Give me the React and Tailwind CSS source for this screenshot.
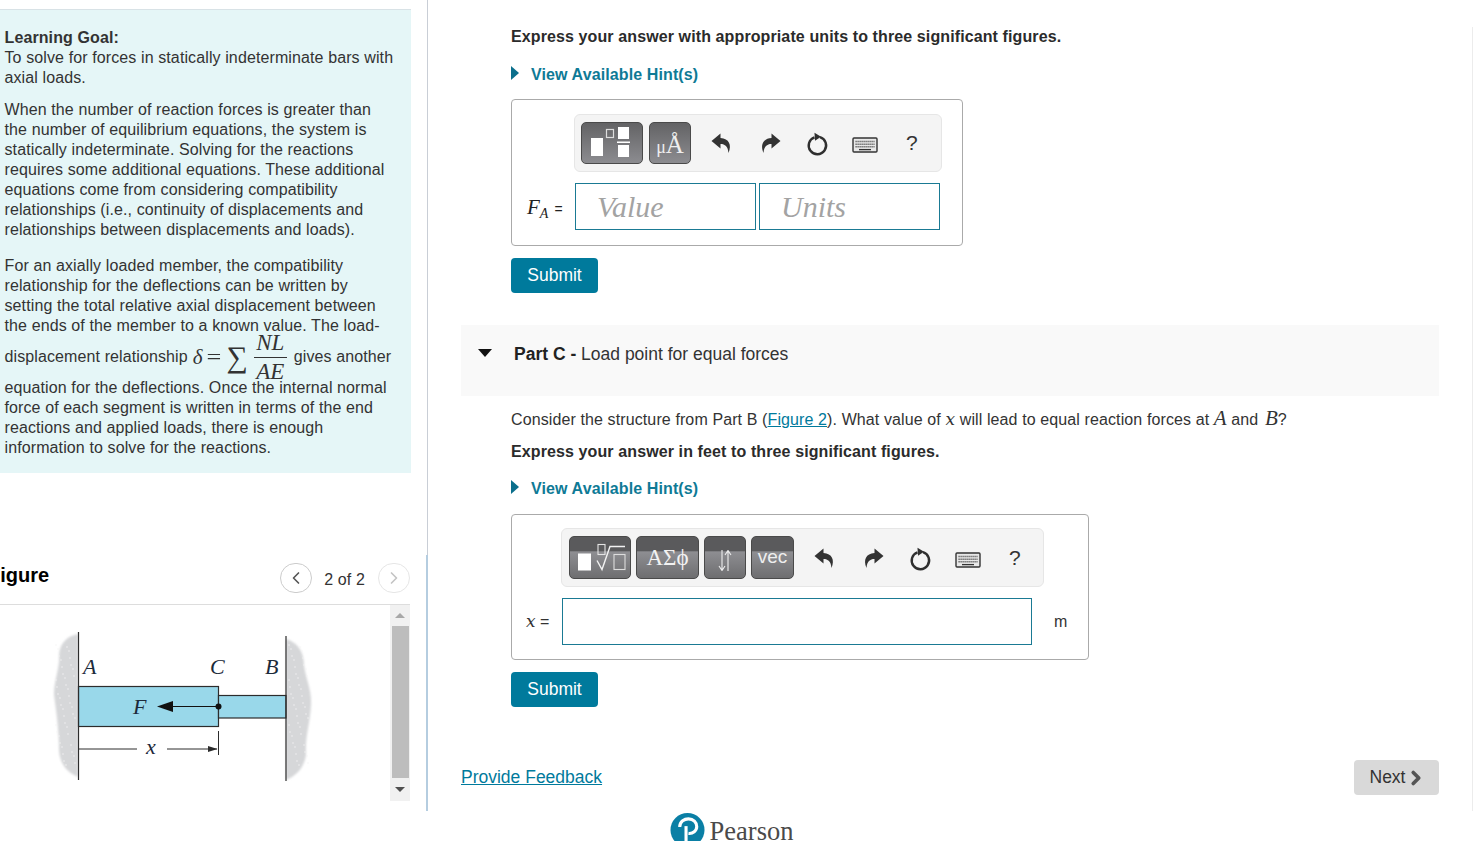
import React from 'react';
import { ChevronLeft, ChevronRight } from 'lucide-react';

const serif = 'font-["Liberation_Serif",serif]';
const mathX = 'font-["DejaVu_Serif",serif]';

const UndoIcon = () => (
    <svg width="24" height="24" viewBox="0 0 24 24" fill="#333">
        <path d="M10.5 2.5 L1.5 10 L10.5 17.5 V13 C15 13 18 15.5 18.5 22 C22 14 19 7.5 10.5 7 Z" />
    </svg>
);

const RedoIcon = () => (
    <svg width="24" height="24" viewBox="0 0 24 24" fill="#333">
        <path d="M13.5 2.5 L22.5 10 L13.5 17.5 V13 C9 13 6 15.5 5.5 22 C2 14 5 7.5 13.5 7 Z" />
    </svg>
);

const ResetIcon = () => (
    <svg width="24" height="24" viewBox="0 0 24 24" fill="none">
        <path d="M9.5 5.3 A8.7 8.7 0 1 0 15 5.2" stroke="#2f2f2f" strokeWidth="2.4" />
        <path d="M9.5 0.8 L16 4.8 L10 8.8 Z" fill="#2f2f2f" />
    </svg>
);

const KeyboardIcon = () => (
    <svg width="26" height="16" viewBox="0 0 26 16" fill="none">
        <rect x="1" y="1" width="24" height="14" rx="1" fill="#e8e8e8" stroke="#333" strokeWidth="1.4" />
        <path d="M3.5 4.5 H22.5 M3.5 7.2 H22.5 M3.5 9.8 H22.5" stroke="#555" strokeWidth="1.4" strokeDasharray="1.2 0.8" />
        <path d="M7 12.6 H19" stroke="#333" strokeWidth="1.3" />
    </svg>
);

const ToolIcons = ({ className }) => (
    <div className={`flex items-center ${className}`}>
        <div className="flex h-[42px] w-[50px] items-center justify-center"><UndoIcon /></div>
        <div className="flex h-[42px] w-[46px] items-center justify-center"><RedoIcon /></div>
        <div className="flex h-[42px] w-12 items-center justify-center pt-0.5"><ResetIcon /></div>
        <div className="flex h-[42px] w-12 items-center justify-center pt-1"><KeyboardIcon /></div>
        <div className="flex h-[42px] w-[46px] items-center justify-center text-[21px] text-[#333]">?</div>
    </div>
);

const HintLink = () => (
    <div className="flex h-5 items-center">
        <span className="mb-1 h-0 w-0 border-y-[7px] border-l-[8px] border-y-transparent border-l-[#0b6f8c]"></span>
        <span className="ml-3 font-bold text-[#0e7a96]">View Available Hint(s)</span>
    </div>
);

const SubmitButton = () => (
    <button className="mt-3 block h-[35px] w-[87px] rounded-sm bg-[#007a9c] text-[17.5px] tracking-normal text-white">Submit</button>
);

const FlatButton = ({ width, children }) => (
    <div className={`flex h-[42px] items-center justify-center rounded-[5px] border border-[#4a4a4a] bg-[linear-gradient(#636365,#8c8c90)] ${width}`}>
        {children}
    </div>
);

const BandButton = ({ width, children }) => (
    <div className={`flex h-[43px] items-center justify-center rounded-[5px] border border-[#4a4a4a] bg-[linear-gradient(#5a5a5c_0,#5a5a5c_34%,#8e8e92_36%,#6e6e70_100%)] ${width}`}>
        {children}
    </div>
);

const WallSpeckles = ({ x0 }) => {
    const dots = [];
    for (let i = 0; i < 42; i++) {
        dots.push(<circle key={i} cx={x0 + ((i * 7) % 20)} cy={645 + ((i * 29) % 125)} r="0.7" fill="#f4f4f4" />);
    }
    return <g>{dots}</g>;
};

const BarFigure = () => (
    <svg width="390" height="196" viewBox="0 605 390 196" className="block">
        <path className="blur-[1px]" d="M78 634 C68 636 60 642 59 655 C60 668 54 680 54 695 C56 710 58 722 59 745 C58 762 66 772 78 777 Z" fill="#d6d7d9" />
        <path className="blur-[1px]" d="M286 639 C296 642 304 650 304 665 C306 680 312 690 311 705 C310 725 305 735 306 755 C304 768 296 776 286 780 Z" fill="#d6d7d9" />
        <WallSpeckles x0={56} />
        <WallSpeckles x0={289} />
        <rect x="78.5" y="686.5" width="140" height="40" fill="#99d8ea" stroke="#2c2c2c" strokeWidth="1.2" />
        <rect x="218.5" y="695.5" width="67.5" height="22.5" fill="#99d8ea" stroke="#2c2c2c" strokeWidth="1.2" />
        <path d="M78.5 632 V780 M286 636 V781" stroke="#2c2c2c" strokeWidth="1.2" />
        <path d="M218 706.5 H170" stroke="#111" strokeWidth="1.2" />
        <path d="M157 706.5 L173 701 V712 Z" fill="#111" />
        <circle cx="218.5" cy="706.5" r="3" fill="#111" />
        <path d="M78.5 749 H137 M167 749 H217 M218.5 731 V755" stroke="#2c2c2c" strokeWidth="1" />
        <path d="M217.5 749 L208 746 V752 Z" fill="#2c2c2c" />
        <g fontFamily="Liberation Serif, serif" fontStyle="italic" fontSize="22" fill="#1c2a3a">
            <text x="83" y="674">A</text>
            <text x="210" y="674">C</text>
            <text x="265" y="674">B</text>
            <text x="133" y="714">F</text>
            <text x="146" y="754">x</text>
        </g>
    </svg>
);

const ScrollRail = () => (
    <div className="flex h-[196px] w-5 flex-col items-center bg-[#f1f1f1]">
        <div className="flex h-[21px] w-full items-center justify-center">
            <span className="h-0 w-0 border-x-[5px] border-b-[5px] border-x-transparent border-b-[#a8a8a8]"></span>
        </div>
        <div className="h-[152px] w-[17px] bg-[#bdbdbd]"></div>
        <div className="flex h-[23px] w-full items-center justify-center">
            <span className="h-0 w-0 border-x-[5px] border-t-[5px] border-x-transparent border-t-[#505050]"></span>
        </div>
    </div>
);

const LeftColumn = () => (
    <div className="w-[427px] overflow-hidden pt-[9px]">
        <div className="w-[411px] border-t border-[#d8e2e6] bg-[#e5f6f7] pb-[15px] pl-[4.5px] pr-4 pt-[18px] leading-5 text-[#333]">
            <p className="font-bold">Learning Goal:</p>
            <p>To solve for forces in statically indeterminate bars with axial loads.</p>
            <p className="mt-3">
                When the number of reaction forces is greater than the number of equilibrium equations, the system is
                statically indeterminate. Solving for the reactions requires some additional equations. These additional
                equations come from considering compatibility relationships (i.e., continuity of displacements and
                relationships between displacements and loads).
            </p>
            <p className="mt-4">
                For an axially loaded member, the compatibility relationship for the deflections can be written by
                setting the total relative axial displacement between the ends of the member to a known value. The load-
            </p>
            <div className="flex h-[42px] items-center whitespace-nowrap">
                <span>displacement relationship</span>
                <span className={`ml-[5px] flex items-center text-[21px] tracking-normal ${serif}`}>
                    <i>δ</i>
                    <span className="ml-[5px] scale-x-125">=</span>
                    <span className="ml-[7px] text-[30px] leading-none">∑</span>
                </span>
                <span className={`ml-[6px] flex w-[33px] flex-col items-center text-[23px] italic leading-[28px] tracking-normal ${serif}`}>
                    <span className="w-full border-b border-[#333] text-center">NL</span>
                    <span>AE</span>
                </span>
                <span className="ml-[7px]">gives another</span>
            </div>
            <p>
                equation for the deflections. Once the internal normal force of each segment is written in terms of the end
                reactions and applied loads, there is enough information to solve for the reactions.
            </p>
        </div>

        <div className="mt-[87px] flex h-[45px] w-[410px] items-start border-b border-[#ddd]">
            <span className="-ml-[12px] mt-[1px] text-xl font-bold tracking-normal text-black">Figure</span>
            <div className="ml-auto mt-[3px] flex items-center">
                <div className="flex h-[30px] w-8 items-center justify-center rounded-full border border-[#ccc]">
                    <ChevronLeft size={20} color="#555" />
                </div>
                <span className="ml-3 mr-[13px] mt-1 text-[#333]">2 of 2</span>
                <div className="flex h-[30px] w-8 items-center justify-center rounded-full border border-[#e6e6e6]">
                    <ChevronRight size={20} color="#c4c4c4" />
                </div>
            </div>
        </div>
        <div className="flex w-[410px]">
            <BarFigure />
            <ScrollRail />
        </div>
    </div>
);

const Divider = () => (
    <div className="flex w-px flex-col">
        <div className="h-[555px] bg-[#c9ced6]"></div>
        <div className="-ml-px w-0.5 flex-1 bg-[#b5cde0]"></div>
    </div>
);

const FirstAnswerBox = () => (
    <div className="mt-[14px] h-[147px] w-[452px] rounded border border-[#aaa] pl-[62px] pt-[14px]">
        <div className="flex h-[58px] w-[368px] items-center rounded-md border border-[#e6e6e6] bg-[#f4f4f4] pl-1.5">
            <FlatButton width="w-[62px]">
                <svg width="44" height="34" viewBox="0 0 44 34">
                    <rect x="1" y="12" width="12" height="18" fill="#fff" />
                    <rect x="16.5" y="3.5" width="7" height="8" fill="none" stroke="#ddd" strokeWidth="1.2" />
                    <rect x="28" y="1" width="11" height="12" fill="#fff" />
                    <rect x="27" y="15.5" width="13" height="1.5" fill="#fff" />
                    <rect x="28" y="19" width="11" height="12" fill="#fff" />
                </svg>
            </FlatButton>
            <div className="ml-1.5">
                <FlatButton width="w-[42px]">
                    <span className={`mt-1 whitespace-nowrap tracking-normal text-[#eee] ${serif}`}>
                        <span className="text-[18px]">μ</span><span className="text-[25px]">Å</span>
                    </span>
                </FlatButton>
            </div>
            <ToolIcons className="ml-1.5" />
        </div>
        <div className="-ml-[62px] mt-[11px] flex items-center">
            <span className={`w-[63px] pl-[15px] pt-0.5 tracking-normal text-[#222] ${serif}`}>
                <i className="text-[21px]">F</i><i className="relative top-1 text-sm">A</i>
                <span className="ml-1.5 font-['Liberation_Sans',sans-serif] text-sm">=</span>
            </span>
            <input
                placeholder="Value"
                className={`h-[47px] w-[181px] border border-[#1a7a94] pl-[21px] text-[30px] italic tracking-normal placeholder:text-[#a3a3a3] ${serif}`}
            />
            <input
                placeholder="Units"
                className={`ml-[3px] h-[47px] w-[181px] border border-[#1a7a94] pl-[21px] text-[30px] italic tracking-normal placeholder:text-[#a3a3a3] ${serif}`}
            />
        </div>
    </div>
);

const SecondAnswerBox = () => (
    <div className="mt-[15px] h-[146px] w-[578px] rounded border border-[#aaa] pl-[49px] pt-[13px]">
        <div className="flex h-[59px] w-[483px] items-center rounded-md border border-[#e6e6e6] bg-[#f4f4f4] pl-[7px]">
            <BandButton width="w-[62px]">
                <svg width="52" height="32" viewBox="0 0 52 32">
                    <rect x="4" y="11.5" width="13" height="17" fill="#fff" />
                    <rect x="24" y="2.5" width="7" height="10" fill="none" stroke="#e4e4e4" strokeWidth="1.1" />
                    <path d="M23 18.5 L28 27.5 L36 4.5 H51" fill="none" stroke="#f2f2f2" strokeWidth="1.4" />
                    <rect x="40" y="12.5" width="11" height="15" fill="none" stroke="#ddd" strokeWidth="1.1" />
                </svg>
            </BandButton>
            <div className="ml-[5px]">
                <BandButton width="w-[63px]">
                    <span className={`text-[23px] leading-none tracking-normal text-[#f2f2f2] ${serif}`}>ΑΣϕ</span>
                </BandButton>
            </div>
            <div className="ml-[5px]">
                <BandButton width="w-[42px]">
                    <svg className="mt-1.5" width="16" height="21" viewBox="0 0 16 21" fill="none" stroke="#eee" strokeWidth="1.1">
                        <path d="M5 0 V20 M2 16 L5 20.5 L8 16" />
                        <path d="M11 21 V1 M8 5 L11 0.5 L14 5" />
                    </svg>
                </BandButton>
            </div>
            <div className="ml-[5px]">
                <BandButton width="w-[43px]">
                    <span className="text-[19px] tracking-normal text-[#eee]">vec</span>
                </BandButton>
            </div>
            <ToolIcons className="ml-1.5" />
        </div>
        <div className="-ml-[49px] mt-[11px] flex items-center">
            <span className="w-[50px] pl-3.5 tracking-normal text-[#333]">
                <i className={`text-[17px] ${mathX}`}>x</i> =
            </span>
            <div className="h-[47px] w-[470px] border border-[#1a7a94]"></div>
            <span className="ml-[22px] text-[#333]">m</span>
        </div>
    </div>
);

const RightColumn = () => (
    <div className="flex-1 pl-[33px] pr-[33px] pt-[27px] text-[#333]">
        <div className="pl-[50px]">
            <p className="h-5 font-bold leading-5 text-[#2b2b2b]">Express your answer with appropriate units to three significant figures.</p>
            <div className="mt-[18px]"><HintLink /></div>
            <FirstAnswerBox />
            <SubmitButton />
        </div>

        <div className="mt-8 flex h-[71px] bg-[#f9f9f9] pt-[19px] text-[17.5px] leading-5 tracking-normal">
            <span className="ml-[17px] mt-[5px] h-0 w-0 border-x-[7px] border-t-[8px] border-x-transparent border-t-[#111]"></span>
            <p className="ml-[22px]"><b className="text-[#222]">Part C -</b> Load point for equal forces</p>
        </div>

        <div className="pl-[50px]">
            <p className="mt-3 h-5 leading-5">
                Consider the structure from Part B (<a className="text-[#007a9c] underline">Figure 2</a>). What value of{' '}
                <i className={`${mathX} text-[17px]`}>x</i> will lead to equal reaction forces at{' '}
                <i className={`${serif} text-[21px]`}>A</i> and <i className={`${serif} ml-0.5 text-[21px]`}>B</i>?
            </p>
            <p className="mt-[14px] h-5 font-bold leading-5 text-[#2b2b2b]">Express your answer in feet to three significant figures.</p>
            <div className="mt-[17px]"><HintLink /></div>
            <SecondAnswerBox />
            <SubmitButton />
        </div>

        <div className="mt-[53px] flex items-center justify-between tracking-normal">
            <a className="text-[17.5px] text-[#007a9c] underline">Provide Feedback</a>
            <button className="flex h-[35px] w-[85px] items-center justify-center rounded-sm bg-[#d9d9d9] pl-1 text-[17.5px] text-[#333]">
                Next
                <ChevronRight size={22} strokeWidth={4} color="#555" />
            </button>
        </div>
    </div>
);

const PearsonLogo = () => (
    <div className="flex items-center justify-center pr-[10px] pt-px">
        <svg width="35" height="36" viewBox="0 0 36 36">
            <circle cx="18" cy="18" r="17.5" fill="#0a7fa5" />
            <path d="M10 15 C10 9 15 6.5 19 6.5 C24 6.5 27.5 10 27.5 14.5 C27.5 19 23.5 22 19 21.5" fill="none" stroke="#fff" strokeWidth="3.2" />
            <path d="M16.5 14 V36" stroke="#fff" strokeWidth="3.2" />
        </svg>
        <span className={`ml-[5px] mt-[3px] text-[26.5px] leading-none tracking-normal text-[#4a4a4a] ${serif}`}>Pearson</span>
    </div>
);

const App = () => {
    return (
        <div className="h-[841px] w-[1473px] overflow-hidden bg-white font-['Liberation_Sans',sans-serif] text-base tracking-[0.11px]">
            <div className="flex h-[811px]">
                <LeftColumn />
                <Divider />
                <RightColumn />
                <div className="mt-[27px] w-px bg-[#ececec]"></div>
            </div>
            <PearsonLogo />
        </div>
    );
};

export default App;
